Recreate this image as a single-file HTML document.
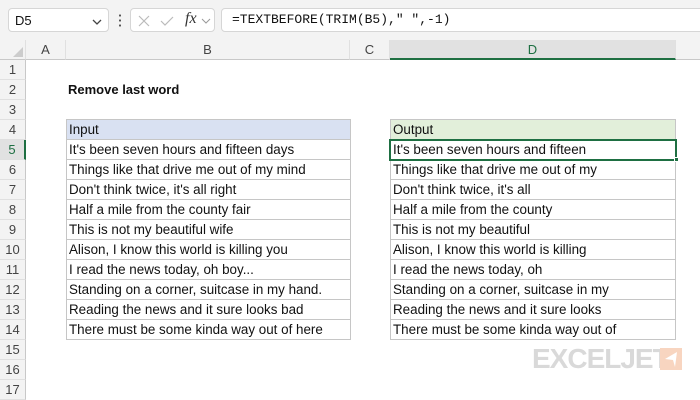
<!DOCTYPE html>
<html><head><style>
*{margin:0;padding:0;box-sizing:border-box}
body{width:700px;height:400px;overflow:hidden;background:#fff;font-family:"Liberation Sans",sans-serif;position:relative}
.top{position:absolute;left:0;top:0;width:700px;height:40px;background:#f3f3f3}
.box{position:absolute;background:#fff;border:1px solid #d6d6d6;border-radius:4px}
.ch{position:absolute;top:40px;height:20px;background:#f3f3f3;border-right:1px solid #e0e0e0;border-bottom:1px solid #c8c8c8;font-size:13px;color:#444;text-align:center;line-height:20px}
.rh{position:absolute;left:0;width:26px;height:20px;background:#f3f3f3;border-bottom:1px solid #e0e0e0;border-right:1px solid #c8c8c8;font-size:13px;color:#444;text-align:center;line-height:20px}
.c{position:absolute;height:20px;font-size:13.4px;line-height:20px;padding-left:2px;color:#111;white-space:nowrap;border:1px solid #c6c6c6;border-top:none}
</style></head><body>
<div class="top"></div>
<div class="box" style="left:8px;top:8px;width:101px;height:24px"><span style="position:absolute;left:6px;top:4px;font-size:13px;color:#111">D5</span><svg style="position:absolute;left:82px;top:9px" width="12" height="8"><path d="M2 2 L6 6 L10 2" fill="none" stroke="#444" stroke-width="1.3"/></svg></div>
<div style="position:absolute;left:119px;top:13px;width:2px;height:14px;background:radial-gradient(circle,#555 1px,transparent 1.2px) 0 0/2px 5px"></div>
<div class="box" style="left:130px;top:8px;width:85px;height:24px">
<svg style="position:absolute;left:6px;top:5px" width="14" height="14"><path d="M2 2L12 12M12 2L2 12" stroke="#bbb" stroke-width="1.2"/></svg>
<svg style="position:absolute;left:28px;top:5px" width="16" height="14"><path d="M2 7L6 11L14 3" fill="none" stroke="#bbb" stroke-width="1.2"/></svg>
<span style="position:absolute;left:54px;top:1px;font-family:'Liberation Serif',serif;font-style:italic;font-size:16px;color:#333">fx</span>
<svg style="position:absolute;left:70px;top:9px" width="10" height="7"><path d="M1 1L5 5L9 1" fill="none" stroke="#999" stroke-width="1"/></svg></div>
<div class="box" style="left:221px;top:8px;width:490px;height:24px"><span style="position:absolute;left:10px;top:3px;font-family:'Liberation Mono',monospace;font-size:13px;color:#111">=TEXTBEFORE(TRIM(B5)," ",-1)</span></div>

<div class="ch" style="left:0;width:26px"></div>
<div class="ch" style="left:26px;width:40px">A</div>
<div class="ch" style="left:66px;width:284px">B</div>
<div class="ch" style="left:350px;width:40px">C</div>
<div class="ch" style="left:390px;width:286px;background:#e1e1e1;border-bottom:2px solid #1e6f42;color:#1e6f42">D</div>
<div class="ch" style="left:676px;width:30px"></div>
<svg style="position:absolute;left:12px;top:46px" width="12" height="12"><path d="M11 1L11 11L1 11Z" fill="#ccc"/></svg>

<div class="rh" style="top:60px">1</div><div class="rh" style="top:80px">2</div><div class="rh" style="top:100px">3</div><div class="rh" style="top:120px">4</div>
<div class="rh" style="top:140px;background:#e1e1e1;color:#1e6f42;border-right:2px solid #1e6f42">5</div>
<div class="rh" style="top:160px">6</div><div class="rh" style="top:180px">7</div><div class="rh" style="top:200px">8</div><div class="rh" style="top:220px">9</div><div class="rh" style="top:240px">10</div><div class="rh" style="top:260px">11</div><div class="rh" style="top:280px">12</div><div class="rh" style="top:300px">13</div><div class="rh" style="top:320px">14</div><div class="rh" style="top:340px">15</div><div class="rh" style="top:360px">16</div><div class="rh" style="top:380px">17</div>

<div style="position:absolute;left:68px;top:82px;font-size:13px;font-weight:bold;color:#111">Remove last word</div>

<div class="c" style="left:66px;top:119px;width:285px;height:21px;background:#d9e1f2;border-top:1px solid #c6c6c6">Input</div>
<div class="c" style="left:66px;top:140px;width:285px">It's been seven hours and fifteen days</div>
<div class="c" style="left:66px;top:160px;width:285px">Things like that drive me out of my mind</div>
<div class="c" style="left:66px;top:180px;width:285px">Don't think twice, it's all right</div>
<div class="c" style="left:66px;top:200px;width:285px">Half a mile from the county fair</div>
<div class="c" style="left:66px;top:220px;width:285px">This is not my beautiful wife</div>
<div class="c" style="left:66px;top:240px;width:285px">Alison, I know this world is killing you</div>
<div class="c" style="left:66px;top:260px;width:285px">I read the news today, oh boy...</div>
<div class="c" style="left:66px;top:280px;width:285px">Standing on a corner, suitcase in my hand.</div>
<div class="c" style="left:66px;top:300px;width:285px">Reading the news and it sure looks bad</div>
<div class="c" style="left:66px;top:320px;width:285px">There must be some kinda way out of here</div>

<div class="c" style="left:390px;top:119px;width:286px;height:21px;background:#e2efda;border-top:1px solid #c6c6c6">Output</div>
<div class="c" style="left:390px;top:140px;width:286px">It's been seven hours and fifteen</div>
<div class="c" style="left:390px;top:160px;width:286px">Things like that drive me out of my</div>
<div class="c" style="left:390px;top:180px;width:286px">Don't think twice, it's all</div>
<div class="c" style="left:390px;top:200px;width:286px">Half a mile from the county</div>
<div class="c" style="left:390px;top:220px;width:286px">This is not my beautiful</div>
<div class="c" style="left:390px;top:240px;width:286px">Alison, I know this world is killing</div>
<div class="c" style="left:390px;top:260px;width:286px">I read the news today, oh</div>
<div class="c" style="left:390px;top:280px;width:286px">Standing on a corner, suitcase in my</div>
<div class="c" style="left:390px;top:300px;width:286px">Reading the news and it sure looks</div>
<div class="c" style="left:390px;top:320px;width:286px">There must be some kinda way out of</div>
<div style="position:absolute;left:389px;top:139px;width:288px;height:22px;border:2px solid #1e6f42"></div>
<div style="position:absolute;left:674px;top:157px;width:5px;height:5px;background:#1e6f42;border:1px solid #fff"></div>

<div style="position:absolute;left:532px;top:343px;font-size:28px;font-weight:bold;color:#d9d9d9;letter-spacing:-1px">EXCELJET</div>
<svg style="position:absolute;left:660px;top:348px" width="22" height="22"><rect width="22" height="22" fill="#f8d5c0"/><path d="M17 4L5 11L13 12L15 19Z" fill="#fff"/></svg>
</body></html>
